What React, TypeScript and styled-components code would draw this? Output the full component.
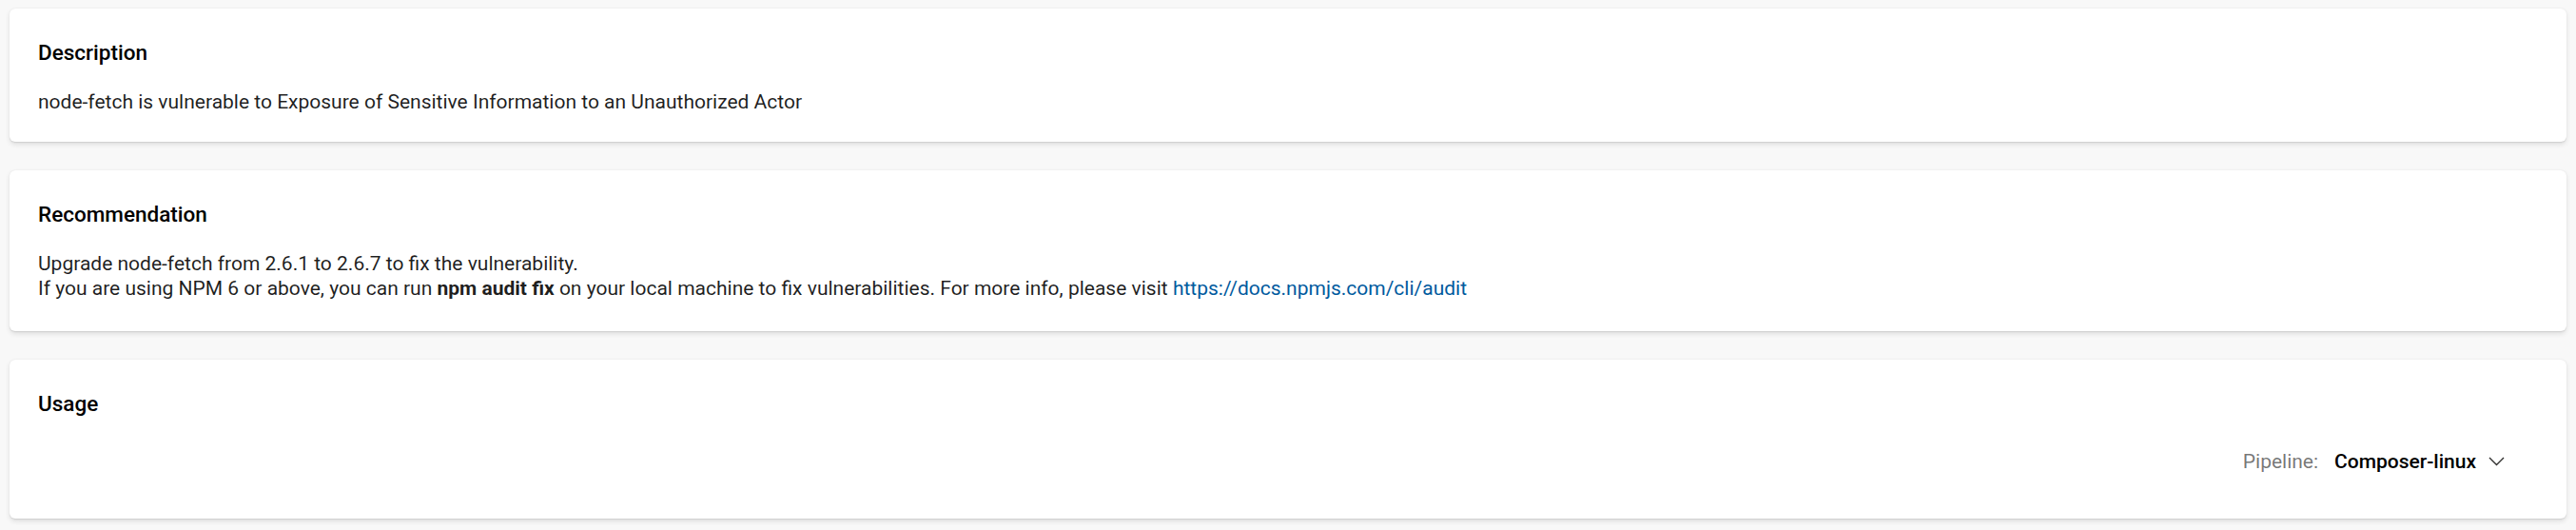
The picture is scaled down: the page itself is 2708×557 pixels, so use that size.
import * as React from 'react';
import styled, { createGlobalStyle } from 'styled-components';

const Global = createGlobalStyle`
  body {
    margin: 0;
    background: #f8f8f8;
    font-family: Roboto, "Open Sans", sans-serif;
    color: rgba(0, 0, 0, 0.9);
  }
`;

const Page = styled.div`
  display: flex;
  flex-direction: column;
  gap: 30px;
  padding: 9px 10px 12px;
`;

const Card = styled.section<{ $bottom?: number }>`
  background: #fff;
  border-radius: 6px;
  box-shadow: 0 2.4px 5.4px rgba(0, 0, 0, 0.1), 0 0.45px 1.35px rgba(0, 0, 0, 0.09);
  padding: 31px 30px ${(p) => p.$bottom ?? 29}px;
`;

const Title = styled.h2`
  margin: 0;
  font-size: 22.5px;
  line-height: 30px;
  font-weight: 500;
  color: #000;
`;

const Body = styled.div`
  margin-top: 24px;
  font-size: 21px;
  line-height: 26px;
  color: rgba(0, 0, 0, 0.88);

  strong {
    font-weight: 700;
  }
`;

const Link = styled.a`
  color: #005a9e;
  text-decoration: none;
`;

const Toolbar = styled.div`
  display: flex;
  justify-content: flex-end;
  margin-top: 31px;
  padding-right: 35px;
`;

const Picker = styled.div`
  display: flex;
  align-items: center;
  font-size: 21px;
  line-height: 30px;
`;

const PickerLabel = styled.span`
  color: rgba(0, 0, 0, 0.55);
  margin-right: 17px;
`;

const PickerValue = styled.span`
  font-weight: 500;
  color: #000;
  margin-right: 13px;
`;

const Chevron = () => (
  <svg width="17" height="10" viewBox="0 0 17 10" fill="none">
    <path d="M1 1l7.5 7.5L16 1" stroke="#323130" strokeWidth="1.4" />
  </svg>
);

export default function App() {
  return (
    <>
      <Global />
      <Page>
        <Card>
          <Title>Description</Title>
          <Body>node-fetch is vulnerable to Exposure of Sensitive Information to an Unauthorized Actor</Body>
        </Card>
        <Card $bottom={32}>
          <Title>Recommendation</Title>
          <Body>
            Upgrade node-fetch from 2.6.1 to 2.6.7 to fix the vulnerability.
            <br />
            If you are using NPM 6 or above, you can run <strong>npm audit fix</strong> on your local machine to fix
            vulnerabilities. For more info, please visit{' '}
            <Link href="#">https://docs.npmjs.com/cli/audit</Link>
          </Body>
        </Card>
        <Card $bottom={45}>
          <Title>Usage</Title>
          <Toolbar>
            <Picker>
              <PickerLabel>Pipeline:</PickerLabel>
              <PickerValue>Composer-linux</PickerValue>
              <Chevron />
            </Picker>
          </Toolbar>
        </Card>
      </Page>
    </>
  );
}
